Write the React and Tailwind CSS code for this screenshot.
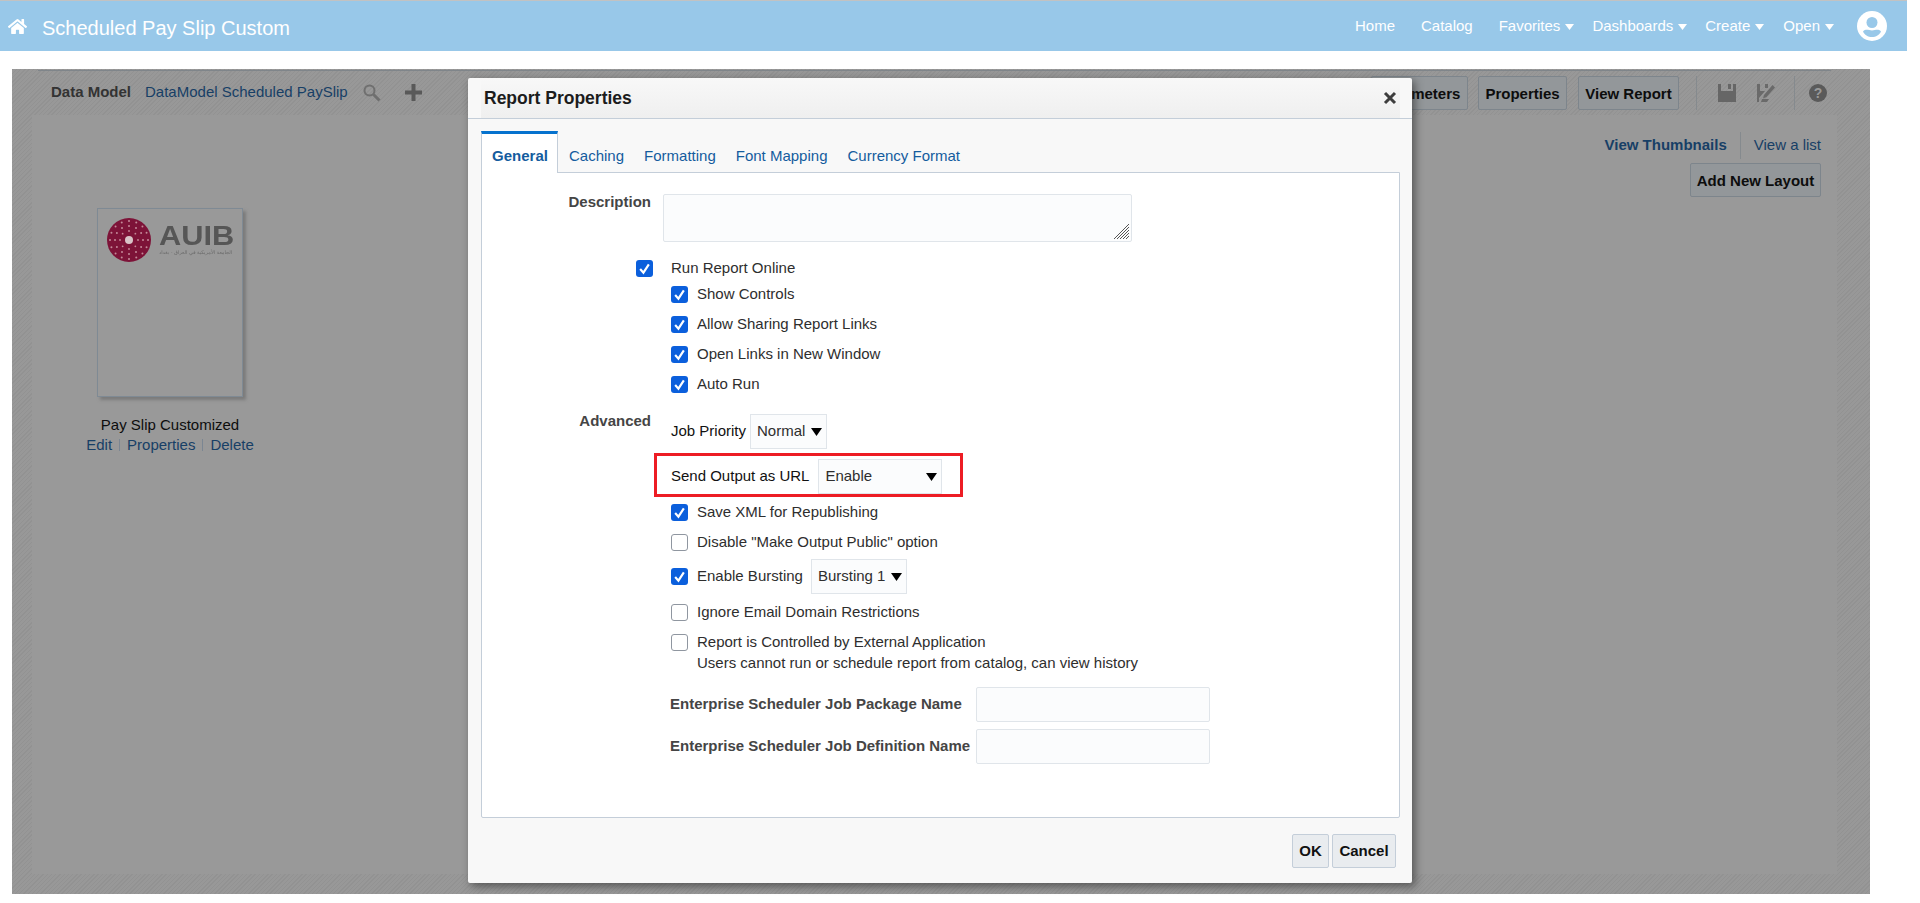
import React from "react";
import { FaHome } from "react-icons/fa";

function Caret({ className = "" }) {
  return (
    <svg viewBox="0 0 11 8" className={"w-[11px] h-[8px] shrink-0 " + className}>
      <path d="M0 0H11L5.5 8Z" fill="#000" />
    </svg>
  );
}

function NavCaret() {
  return (
    <svg viewBox="0 0 9 6" className="w-[9px] h-[6px] ml-[5px] mt-[2px]">
      <path d="M0 0H9L4.5 6Z" fill="#fff" />
    </svg>
  );
}

function Check({ on }) {
  return on ? (
    <span className="w-[17px] h-[17px] shrink-0 rounded-[3px] bg-[#0b5fdc] flex items-center justify-center">
      <svg viewBox="0 0 12 12" className="w-[13px] h-[13px]">
        <path d="M2 6.5L5 9.8L10 2.2" fill="none" stroke="#fff" strokeWidth="2" />
      </svg>
    </span>
  ) : (
    <span className="w-[17px] h-[17px] shrink-0 rounded-[3px] bg-white border border-[#8f96a0]" />
  );
}

function CheckRow({ on, label, h = "h-[30px]" }) {
  return (
    <div className={"flex items-center gap-[9px] " + h}>
      <Check on={on} />
      <span className="text-[15px] text-[#2e2e2e]">{label}</span>
    </div>
  );
}

function Select({ w, text }) {
  return (
    <div className={"h-[35px] bg-[#fbfcfd] border border-[#e0e5ea] flex items-center justify-between pl-[6px] pr-[4px] text-[15px] text-[#2e2e2e] " + w}>
      <span>{text}</span>
      <Caret />
    </div>
  );
}

function GrayButton({ children, w }) {
  return (
    <button className={"h-[34px] pt-[2px] rounded-[2px] bg-[#93979a] border border-[#7d858c] font-bold text-[15px] text-[#0d0d0d] " + w}>
      {children}
    </button>
  );
}

function SaveIcon() {
  return (
    <svg viewBox="0 0 18 18" className="w-[18px] h-[18px]">
      <path fillRule="evenodd" d="M0 0H3V7H15V0H18V18H0ZM10 0H13V5H10Z" fill="#666666" />
    </svg>
  );
}

function SaveAsIcon() {
  return (
    <svg viewBox="0 0 18 18" className="w-[18px] h-[18px]">
      <path d="M0 0H3V7H8L2 14V18H0ZM8 0H11V4H8ZM15.500 1L18 3.500L9.500 13L6 14.500L7 11ZM5 15H12L10 18H4Z" fill="#6a6a6a" />
    </svg>
  );
}

function Logo() {
  const dots = [];
  for (let r of [9, 14, 19]) {
    const n = r === 9 ? 8 : r === 14 ? 12 : 16;
    for (let i = 0; i < n; i++) {
      const a = (i / n) * Math.PI * 2;
      dots.push(<circle key={r + "-" + i} cx={22 + r * Math.cos(a)} cy={22 + r * Math.sin(a)} r={r === 9 ? 0.9 : 1} fill="#c48a99" />);
    }
  }
  return (
    <div className="flex items-start gap-[8px] pl-[9px] pt-[9px] blur-[0.4px]">
      <svg viewBox="0 0 44 44" className="w-[44px] h-[44px] shrink-0">
        <circle cx="22" cy="22" r="22" fill="#7d1338" />
        {dots}
        <circle cx="22" cy="22" r="4" fill="#d8c4c8" />
      </svg>
      <div className="flex flex-col items-start pt-[7px]">
        <span className="font-bold text-[27px] leading-[22px] text-[#565656] origin-left scale-x-[1.14]">AUIB</span>
        <span className="text-[5px] leading-[8px] mt-[1px] text-[#6a6a6a] whitespace-nowrap font-['DejaVu_Sans',sans-serif]">الجامعة الأمريكية في العراق - بغداد</span>
      </div>
    </div>
  );
}

export default function App() {
  return (
    <div className="relative w-[1920px] h-[903px] overflow-hidden bg-white font-['Liberation_Sans',Arial,sans-serif]">
      <div className="h-px w-[1907px] bg-[#c2c2c2]" />
      <header className="w-[1907px] h-[50px] bg-[#98c8e9] flex items-center text-white">
        <FaHome className="ml-[8px] w-[19px] h-[19px]" />
        <span className="ml-[15px] pt-[4px] text-[20px]">Scheduled Pay Slip Custom</span>
        <nav className="ml-auto pr-[20px] flex items-center text-[15px]">
          <span>Home</span>
          <span className="ml-[26px]">Catalog</span>
          <span className="ml-[26px]">Favorites</span>
          <NavCaret />
          <span className="ml-[18px]">Dashboards</span>
          <NavCaret />
          <span className="ml-[18px]">Create</span>
          <NavCaret />
          <span className="ml-[19px]">Open</span>
          <NavCaret />
          <svg viewBox="0 0 30 30" className="ml-[23px] w-[30px] h-[30px]">
            <circle cx="15" cy="15" r="15" fill="#fff" />
            <circle cx="15" cy="11.5" r="5.5" fill="#98c8e9" />
            <path d="M6 20.5C9 17.5 11.5 19.5 15 19.5C18.5 19.5 21 17.5 24 20.5C22.5 24 19 26 15 26C11 26 7.500 24 6 20.500Z" fill="#98c8e9" />
          </svg>
        </nav>
      </header>

      <main className="ml-[12px] mt-[18px] w-[1858px] h-[825px] bg-[repeating-linear-gradient(135deg,#929292_0px,#929292_1px,#989898_1px,#989898_3px)]">
        <div className="h-px" />
        <div className="ml-[26px] mr-[39px] h-[45px] border-t border-[#7f858a] flex items-center justify-between pl-[13px] pr-[4px]">
          <div className="flex items-center mb-px">
            <span className="font-bold text-[15px] text-[#333]">Data Model</span>
            <span className="ml-[14px] text-[15px] text-[#173f66]">DataModel Scheduled PaySlip</span>
            <svg viewBox="0 0 18 18" className="ml-[15px] w-[18px] h-[18px]">
              <circle cx="6.500" cy="6.500" r="5" fill="none" stroke="#6f6f6f" strokeWidth="2" />
              <path d="M10.500 10.500L16.500 16.500" stroke="#6f6f6f" strokeWidth="3" />
            </svg>
            <svg viewBox="0 0 17 17" className="ml-[24px] w-[17px] h-[17px]">
              <path d="M6.500 0H10.500V6.500H17V10.500H10.500V17H6.500V10.500H0V6.500H6.500Z" fill="#595959" />
            </svg>
          </div>
          <div className="flex items-center">
            <GrayButton w="w-[97px]">Parameters</GrayButton>
            <span className="ml-[10px]"><GrayButton w="w-[89px]">Properties</GrayButton></span>
            <span className="ml-[11px]"><GrayButton w="w-[101px]">View Report</GrayButton></span>
            <span className="ml-[17px] w-px h-[34px] bg-[#858a8e]" />
            <span className="ml-[21px]"><SaveIcon /></span>
            <span className="ml-[21px]"><SaveAsIcon /></span>
            <span className="ml-[19px] w-px h-[34px] bg-[#858a8e]" />
            <span className="ml-[14px] w-[18px] h-[18px] rounded-full bg-[#5a5a5a] text-[#999] font-bold text-[14px] leading-[18px] text-center">?</span>
          </div>
        </div>

        <section className="ml-[20px] w-[1805px] h-[759px] bg-[#999999] flex justify-between">
          <div className="ml-[65px] mt-[93px] w-[146px] flex flex-col items-center whitespace-nowrap">
            <div className="w-[146px] h-[189px] border border-[#7f8a94] shadow-[3px_3px_3px_#7b7b7b] self-start overflow-hidden">
              <Logo />
            </div>
            <span className="mt-[19px] text-[15px] leading-[17px] text-[#0d0d0d]">Pay Slip Customized</span>
            <div className="mt-[3px] flex items-center text-[15px] leading-[17px] text-[#173f66]">
              <span>Edit</span>
              <span className="mx-[7px] w-px h-[12px] bg-[#7b8692]" />
              <span>Properties</span>
              <span className="mx-[7px] w-px h-[12px] bg-[#7b8692]" />
              <span>Delete</span>
            </div>
          </div>
          <div className="pt-[16px] pr-[16px] flex flex-col items-end">
            <div className="h-[27px] pt-px flex items-center text-[15px] text-[#173f66]">
              <span className="font-bold">View Thumbnails</span>
              <span className="mx-[13px] w-px h-[27px] bg-[#858a8e]" />
              <span>View a list</span>
            </div>
            <div className="mt-[5px]"><GrayButton w="w-[131px]">Add New Layout</GrayButton></div>
          </div>
        </section>
      </main>

      <div className="absolute left-[468px] top-[78px] w-[944px] h-[805px] bg-[#f8f8f8] rounded-[2px] shadow-[3px_3px_8px_rgba(40,40,40,0.6)] flex flex-col">
        <div className="h-[41px] shrink-0 border-b border-[#c4ced9]">
          <div className="ml-[13px] mr-[12px] h-[40px] bg-gradient-to-b from-[#f8f8f8] to-[#efefef] flex items-center justify-between pl-[3px] pr-[3px]">
            <span className="font-bold text-[17.5px] text-[#1c1c1c]">Report Properties</span>
            <svg viewBox="0 0 14 14" className="w-[14px] h-[14px]">
              <path d="M2 2L12 12M12 2L2 12" stroke="#3d3d3d" strokeWidth="3" />
            </svg>
          </div>
        </div>

        <div className="ml-[13px] mr-[12px] mt-[12px] h-[42px] shrink-0 flex items-stretch text-[15px] text-[#145c9e]">
          <div className="w-[77px] h-[42px] border-t-[3px] border-t-[#0572ce] border-x border-x-[#c4ced9] bg-white relative z-10 font-bold flex items-center justify-center pt-[5px] pl-px">General</div>
          <div className="flex items-center gap-[20px] pl-[11px] pt-[8px]">
            <span>Caching</span>
            <span>Formatting</span>
            <span>Font Mapping</span>
            <span>Currency Format</span>
          </div>
        </div>

        <div className="ml-[13px] mr-[12px] -mt-px h-[646px] shrink-0 bg-white border border-[#c4ced9] rounded-b-[2px]">
          <div className="mt-[21px] flex items-start">
            <span className="w-[169px] text-right font-bold text-[15px] leading-[16px] text-[#454545]">Description</span>
            <div className="relative ml-[12px] w-[469px] h-[48px] bg-[#fbfcfd] border border-[#e0e5ea] rounded-[2px]">
              <svg viewBox="0 0 17 17" className="absolute right-px bottom-px w-[17px] h-[17px]">
                <path d="M1 16L16 1M4 16L16 4M7 16L16 7M10 16L16 10M13 16L16 13" stroke="#555" strokeWidth="1" />
              </svg>
            </div>
          </div>

          <div className="ml-[154px] mt-[18px] h-[17px] flex items-center gap-[18px]">
            <Check on />
            <span className="text-[15px] text-[#2e2e2e]">Run Report Online</span>
          </div>
          <div className="ml-[189px] mt-[2px]">
            <CheckRow on label="Show Controls" />
            <CheckRow on label="Allow Sharing Report Links" />
            <CheckRow on label="Open Links in New Window" />
            <CheckRow on label="Auto Run" />
          </div>

          <div className="mt-[15px] flex items-start">
            <span className="w-[169px] text-right font-bold text-[15px] leading-[14px] text-[#454545]">Advanced</span>
            <div className="ml-[20px]">
              <div className="h-[35px] flex items-center gap-[4px]">
                <span className="text-[15px] text-[#111]">Job Priority</span>
                <Select w="w-[77px]" text="Normal" />
              </div>
              <div className="-ml-[17px] mt-[4px] w-[309px] h-[44px] border-[3px] border-[#ed1c24] flex items-center pl-[14px] pt-[3px] gap-[9px]">
                <span className="text-[15px] text-[#111]">Send Output as URL</span>
                <Select w="w-[124px]" text="Enable" />
              </div>
              <CheckRow on label={"Save XML for Republishing"} />
              <CheckRow label={'Disable "Make Output Public" option'} />
              <div className="mt-[2px] h-[35px] flex items-center">
                <Check on />
                <span className="ml-[9px] text-[15px] text-[#2e2e2e]">Enable Bursting</span>
                <span className="ml-[8px]"><Select w="w-[96px]" text="Bursting 1" /></span>
              </div>
              <div className="mt-[3px]">
                <CheckRow label="Ignore Email Domain Restrictions" />
                <CheckRow label="Report is Controlled by External Application" />
              </div>
              <div className="ml-[26px] h-[12px] leading-[12px] text-[15px] text-[#2e2e2e]">Users cannot run or schedule report from catalog, can view history</div>
              <div className="mt-[18px] -ml-px flex items-center h-[35px] w-[540px] justify-between">
                <span className="font-bold text-[15px] text-[#454545]">Enterprise Scheduler Job Package Name</span>
                <span className="w-[234px] h-[35px] bg-[#fbfcfd] border border-[#e0e5ea] rounded-[2px]" />
              </div>
              <div className="mt-[7px] -ml-px flex items-center h-[35px] w-[540px] justify-between">
                <span className="font-bold text-[15px] text-[#454545]">Enterprise Scheduler Job Definition Name</span>
                <span className="w-[234px] h-[35px] bg-[#fbfcfd] border border-[#e0e5ea] rounded-[2px]" />
              </div>
            </div>
          </div>
        </div>

        <div className="mt-[16px] pr-[16px] flex justify-end gap-[3px]">
          <button className="w-[37px] h-[34px] pt-px bg-[#e9ecef] border border-[#c4ced9] rounded-[2px] font-bold text-[15px] text-[#111]">OK</button>
          <button className="w-[64px] h-[34px] pt-px bg-[#e9ecef] border border-[#c4ced9] rounded-[2px] font-bold text-[15px] text-[#111]">Cancel</button>
        </div>
      </div>
    </div>
  );
}
